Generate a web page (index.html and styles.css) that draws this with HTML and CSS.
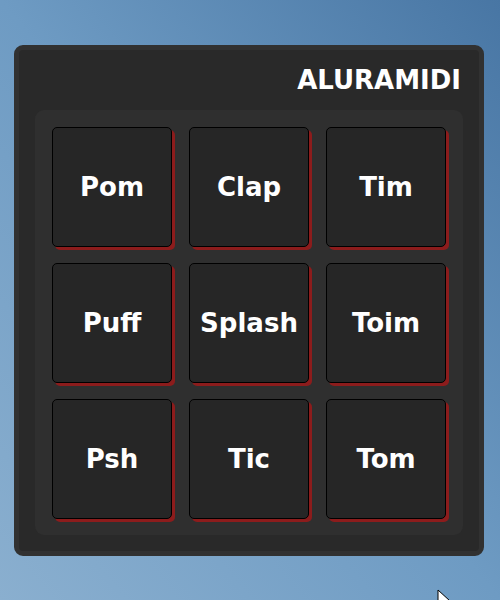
FILE: index.html
```html
<!DOCTYPE html>
<html lang="pt-BR">
<head>
<meta charset="utf-8">
<title>Alura Midi</title>
<link rel="stylesheet" href="styles.css">
</head>
<body>
<main class="panel">
  <h1 class="title">ALURAMIDI</h1>
  <section class="keys">
    <button class="pad">Pom</button>
    <button class="pad">Clap</button>
    <button class="pad">Tim</button>
    <button class="pad">Puff</button>
    <button class="pad">Splash</button>
    <button class="pad">Toim</button>
    <button class="pad">Psh</button>
    <button class="pad">Tic</button>
    <button class="pad">Tom</button>
  </section>
</main>
<svg class="cursor" width="14" height="22" viewBox="0 0 14 22">
  <path d="M1 1 L1 17 L5 13 L8 20 L10.5 19 L7.5 12 L13 12 Z" fill="#fff" stroke="#000" stroke-width="1"/>
</svg>
</body>
</html>
```
FILE: styles.css
```css
html, body {
  margin: 0;
  padding: 0;
  height: 600px;
  overflow: hidden;
}
body {
  background: linear-gradient(to top right, #8aafcf 0%, #6e9bc3 50%, #4876a4 100%);
  font-family: "DejaVu Sans", "Liberation Sans", sans-serif;
  position: relative;
}
.panel {
  box-sizing: border-box;
  width: 470px;
  margin: 45px 0 0 14px;
  background: #292929;
  border: 5px solid #313131;
  border-radius: 9px;
  padding: 15px 16px 16px 16px;
  display: flex;
  flex-direction: column;
}
.title {
  margin: 0;
  color: #ffffff;
  font-size: 26px;
  font-weight: bold;
  line-height: 30px;
  text-align: right;
  padding-right: 2px;
}
.keys {
  margin-top: 15px;
  background: #2f2f2f;
  border-radius: 9px;
  padding: 17px 17px 16px 17px;
  display: grid;
  grid-template-columns: repeat(3, 120px);
  grid-auto-rows: 120px;
  column-gap: 17px;
  row-gap: 16px;
}
.pad {
  box-sizing: border-box;
  width: 120px;
  height: 120px;
  margin: 0;
  padding: 0;
  background: #262626;
  border: 1px solid #000;
  border-radius: 5px;
  box-shadow: 3px 3px 0 #8c1c1c;
  color: #ffffff;
  font-family: "DejaVu Sans", "Liberation Sans", sans-serif;
  font-size: 26px;
  font-weight: bold;
  display: flex;
  align-items: center;
  justify-content: center;
}
.cursor {
  position: absolute;
  left: 437px;
  top: 589px;
}
```
